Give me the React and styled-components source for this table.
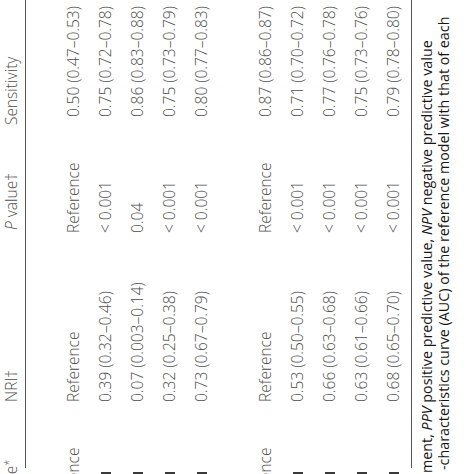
import React from 'react';
import styled, { createGlobalStyle } from 'styled-components';

const GlobalStyle = createGlobalStyle`
  html, body {
    margin: 0;
    padding: 0;
    background: #fff;
  }
`;

const Viewport = styled.div`
  width: 474px;
  height: 474px;
  overflow: hidden;
  background: #fff;
`;

// the scan is turned a quarter turn, so the page is laid out upright and rotated
const Page = styled.div`
  width: 474px;
  height: 474px;
  transform: rotate(-90deg);
  transform-origin: center;
  display: flex;
  flex-direction: column;
  font-family: 'Open Sans', 'Noto Sans', sans-serif;
  color: #4d4d4d;
`;

const Table = styled.div`
  margin-left: 6px;
  display: flex;
  flex-direction: column;
`;

const Head = styled.div`
  display: grid;
  grid-template-columns: 66px 169px 116px 1fr;
  align-items: center;
  height: 25px;
  border-bottom: 1px solid #555;
  font-size: 15.5px;
  font-weight: 300;
  white-space: nowrap;
`;

const HeadCell = styled.div`
  margin-left: ${(p) => p.$shift || 0}px;
  margin-top: -4px;
`;

const Body = styled.div`
  display: flex;
  flex-direction: column;
  padding-top: 31px;
  padding-bottom: 2px;
  border-bottom: 1px solid #555;
`;

const Row = styled.div`
  display: grid;
  grid-template-columns: 66px 169px 116px 1fr;
  align-items: center;
  height: 32px;
  font-size: 15.5px;
  font-weight: 300;
  white-space: nowrap;
`;

const Spacer = styled.div`
  height: 32px;
`;

const FirstCell = styled.div`
  display: flex;
  align-items: center;
  margin-left: ${(p) => p.$shift}px;
`;

const Mark = styled.span`
  display: inline-block;
  flex: none;
  width: 10px;
  height: 10px;
  margin-top: 1px;
  background: #3a3a3a;
`;

const Cell = styled.div``;

const Sup = styled.sup`
  font-size: 11px;
  vertical-align: 5px;
  line-height: 0;
`;

const Ital = styled.i`
  font-style: italic;
`;

const Foot = styled.div`
  padding-top: 6px;
  display: flex;
  flex-direction: column;
  font-size: 14.3px;
  line-height: 17px;
  color: #151515;
  font-weight: 400;
`;

const FootLine = styled.div`
  white-space: nowrap;
  padding-left: ${(p) => p.$indent || 0}px;
`;

const groups = [
  [
    ['Reference', 'Reference', '0.50 (0.47–0.53)'],
    ['0.39 (0.32–0.46)', '< 0.001', '0.75 (0.72–0.78)'],
    ['0.07 (0.003–0.14)', '0.04', '0.86 (0.83–0.88)'],
    ['0.32 (0.25–0.38)', '< 0.001', '0.75 (0.73–0.79)'],
    ['0.73 (0.67–0.79)', '< 0.001', '0.80 (0.77–0.83)'],
  ],
  [
    ['Reference', 'Reference', '0.87 (0.86–0.87)'],
    ['0.53 (0.50–0.55)', '< 0.001', '0.71 (0.70–0.72)'],
    ['0.66 (0.63–0.68)', '< 0.001', '0.77 (0.76–0.78)'],
    ['0.63 (0.61–0.66)', '< 0.001', '0.75 (0.73–0.76)'],
    ['0.68 (0.65–0.70)', '< 0.001', '0.79 (0.78–0.80)'],
  ],
];

function DataRow({ cells, index }) {
  const isRef = index === 0;
  return (
    <Row>
      <FirstCell $shift={isRef ? -50 : -14}>
        {isRef ? 'Reference' : <Mark />}
      </FirstCell>
      {cells.map((c, i) => (
        <Cell key={i}>{c}</Cell>
      ))}
    </Row>
  );
}

export default function App() {
  return (
    <Viewport>
      <GlobalStyle />
      <Page>
        <Table>
          <Head>
            <HeadCell $shift={-54}>
              Variable<Sup>*</Sup>
            </HeadCell>
            <HeadCell>NRI†</HeadCell>
            <HeadCell $shift={3}>
              <Ital>P</Ital> value†
            </HeadCell>
            <HeadCell $shift={-8}>Sensitivity</HeadCell>
          </Head>
          <Body>
            {groups.map((rows, g) => (
              <React.Fragment key={g}>
                {g > 0 && <Spacer />}
                {rows.map((cells, i) => (
                  <DataRow key={i} cells={cells} index={i} />
                ))}
              </React.Fragment>
            ))}
          </Body>
        </Table>
        <Foot>
          <FootLine $indent={1}>
            ment, <Ital>PPV</Ital> positive predictive value, <Ital>NPV</Ital> negative predictive value
          </FootLine>
          <FootLine $indent={4}>
            -characteristics curve (AUC) of the reference model with that of each
          </FootLine>
        </Foot>
      </Page>
    </Viewport>
  );
}
